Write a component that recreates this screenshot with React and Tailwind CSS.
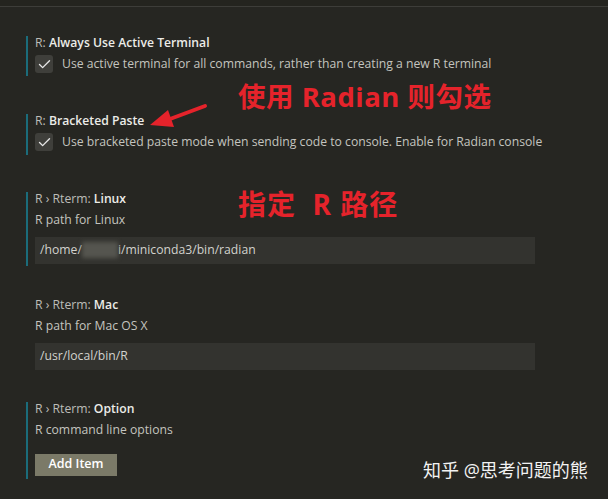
import { Check } from "lucide-react";

const font = { fontFamily: '"Open Sans", "Noto Sans CJK SC", sans-serif' };

const Title = ({ prefix, name }) => (
  <div className="text-[12.2px] leading-[14px] text-[#bdbdb8]">
    {prefix}
    <span className="font-semibold text-[#ececE8]">{name}</span>
  </div>
);

const CheckRow = ({ text }) => (
  <div className="flex items-center mt-[5px]">
    <div className="w-[18px] h-[18px] bg-[#3f3f3b] rounded-[3px] flex items-center justify-center">
      <Check size={15} strokeWidth={2.2} className="text-[#e6e6e6]" />
    </div>
    <span className="ml-[9px] text-[12.2px] text-[#c4c4bf]">{text}</span>
  </div>
);

const Arrow = () => (
  <svg className="absolute left-[148px] top-[102px]" width="62" height="30" viewBox="0 0 62 30">
    <path d="M57,4 L22,17" stroke="#e5232b" strokeWidth="4" strokeLinecap="round" />
    <polygon points="2,23 20,8 26,25" fill="#e5232b" />
  </svg>
);

const App = () => {
  return (
    <div
      className="relative w-[608px] h-[499px] bg-[#262622] overflow-hidden"
      style={font}
    >
      <div className="h-[6px] bg-[#24241f]" />
      <div className="border-t border-[#3d3d39]" />

      <div className="pl-[26px]">
        <div className="mt-[29px] border-l-2 border-[#1b6c7b] pl-[7px] pb-[3px]">
          <Title prefix="R: " name="Always Use Active Terminal" />
          <CheckRow text="Use active terminal for all commands, rather than creating a new R terminal" />
        </div>

        <div className="mt-[38px] border-l-2 border-[#1b6c7b] pl-[7px] pb-[3px]">
          <Title prefix="R: " name="Bracketed Paste" />
          <CheckRow text="Use bracketed paste mode when sending code to console. Enable for Radian console" />
        </div>

        <div className="mt-[37px] border-l-2 border-[#1b6c7b] pl-[7px] pb-[2px]">
          <Title prefix="R › Rterm: " name="Linux" />
          <div className="mt-[7px] text-[12.2px] leading-[14px] text-[#c4c4bf]">R path for Linux</div>
          <div className="mt-[10px] w-[500px] h-[27px] bg-[#33332f] flex items-center pl-[5px] text-[12.2px] text-[#d2d2cd]">
            /home/
            <span className="inline-block w-[36px] h-[16px] bg-[#55554f] blur-[2px]" />
            i/miniconda3/bin/radian
          </div>
        </div>

        <div className="mt-[32px] border-l-2 border-transparent pl-[7px]">
          <Title prefix="R › Rterm: " name="Mac" />
          <div className="mt-[7px] text-[12.2px] leading-[14px] text-[#c4c4bf]">R path for Mac OS X</div>
          <div className="mt-[10px] w-[500px] h-[27px] bg-[#33332f] flex items-center pl-[5px] text-[12.2px] text-[#d2d2cd]">
            /usr/local/bin/R
          </div>
        </div>

        <div className="mt-[32px] border-l-2 border-[#1b6c7b] pl-[7px] pb-[3px]">
          <Title prefix="R › Rterm: " name="Option" />
          <div className="mt-[7px] text-[12.2px] leading-[14px] text-[#c4c4bf]">R command line options</div>
          <button className="mt-[17px] w-[82px] h-[22px] bg-[#7b7a68] text-white text-[12.5px] font-semibold">
            Add Item
          </button>
        </div>
      </div>

      <div className="absolute left-[238px] top-[76px] text-[27.5px] font-bold text-[#e5232b] tracking-[0.5px]">
        使用 Radian 则勾选
      </div>
      <div className="absolute left-[238px] top-[183px] text-[28px] font-bold text-[#e5232b] tracking-[1px]">
        指定&nbsp;&nbsp;R 路径
      </div>
      <Arrow />

      <div className="absolute left-[423px] top-[457px] text-[18px] text-[#f2f2f2]">
        知乎 @思考问题的熊
      </div>
    </div>
  );
};

export default App;
